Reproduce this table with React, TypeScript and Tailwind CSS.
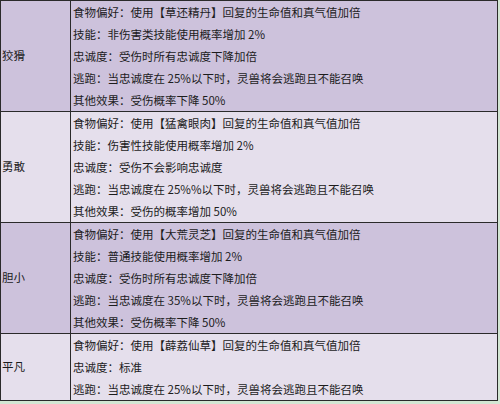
const rows = [
  {
    name: "狡猾",
    dark: true,
    lines: [
      "食物偏好：使用【草还精丹】回复的生命值和真气值加倍",
      "技能：非伤害类技能使用概率增加 2%",
      "忠诚度：受伤时所有忠诚度下降加倍",
      "逃跑：当忠诚度在 25%以下时，灵兽将会逃跑且不能召唤",
      "其他效果：受伤概率下降 50%",
    ],
  },
  {
    name: "勇敢",
    dark: false,
    lines: [
      "食物偏好：使用【猛禽眼肉】回复的生命值和真气值加倍",
      "技能：伤害性技能使用概率增加 2%",
      "忠诚度：受伤不会影响忠诚度",
      "逃跑：当忠诚度在 25%%以下时，灵兽将会逃跑且不能召唤",
      "其他效果：受伤的概率增加 50%",
    ],
  },
  {
    name: "胆小",
    dark: true,
    lines: [
      "食物偏好：使用【大荒灵芝】回复的生命值和真气值加倍",
      "技能：普通技能使用概率增加 2%",
      "忠诚度：受伤时所有忠诚度下降加倍",
      "逃跑：当忠诚度在 35%以下时，灵兽将会逃跑且不能召唤",
      "其他效果：受伤概率下降 50%",
    ],
  },
  {
    name: "平凡",
    dark: false,
    lines: [
      "食物偏好：使用【薜荔仙草】回复的生命值和真气值加倍",
      "忠诚度：标准",
      "逃跑：当忠诚度在 25%以下时，灵兽将会逃跑且不能召唤",
    ],
  },
];

export default function App() {
  return (
    <div className="h-[404px] w-[500px] bg-[#d3e6d3]">
      <div
        className="flex w-[498px] flex-col border border-[#2a2a2a] text-[11.5px] text-[#1c1c1c]"
        style={{ fontFamily: '"Noto Sans CJK SC", "Noto Sans", sans-serif' }}
      >
        {rows.map((row, i) => (
          <div
            key={row.name}
            className={`flex ${i > 0 ? "border-t border-[#2a2a2a]" : ""} ${
              row.dark ? "bg-[#cdc2dc]" : "bg-[#e5dfec]"
            }`}
          >
            {/* trait name */}
            <div className="flex w-[70px] shrink-0 items-center border-r border-[#2a2a2a] pl-[1px]">
              {row.name}
            </div>
            {/* effects */}
            <div className="flex flex-col pl-[2px]">
              {row.lines.map((line) => (
                <div key={line} className="h-[22px] whitespace-nowrap leading-[22px]">
                  {line}
                </div>
              ))}
            </div>
          </div>
        ))}
      </div>
    </div>
  );
}
